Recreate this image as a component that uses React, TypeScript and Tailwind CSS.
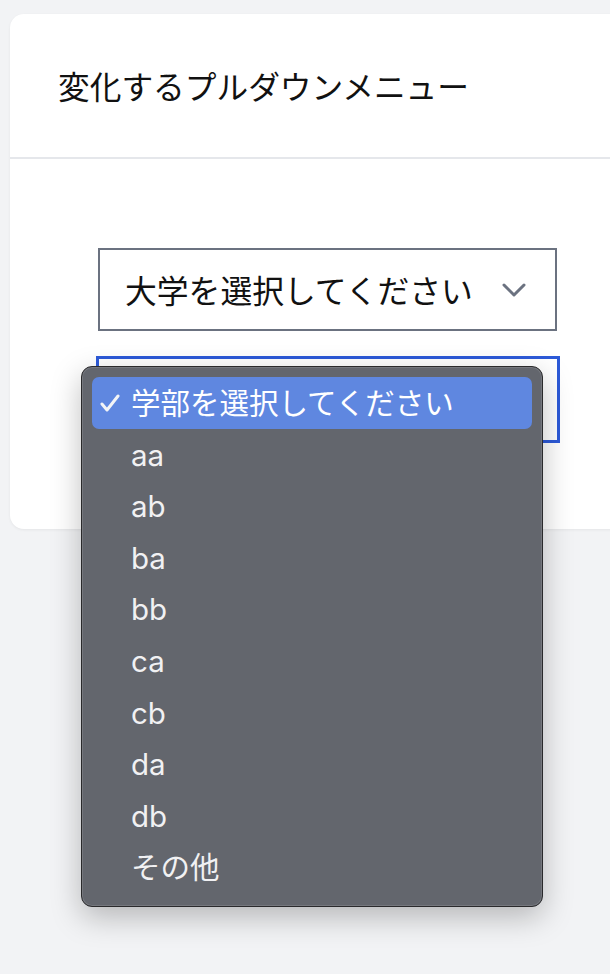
import React from 'react';

const options = ['aa', 'ab', 'ba', 'bb', 'ca', 'cb', 'da', 'db', 'その他'];

const ChevronDown: React.FC = () => (
    <svg width="26" height="16" viewBox="0 0 26 16" fill="none">
        <path d="M3 3l10 10L23 3" stroke="#6b7280" strokeWidth="3" strokeLinecap="round" strokeLinejoin="round" />
    </svg>
);

const CheckIcon: React.FC = () => (
    <svg width="20" height="18" viewBox="0 0 20 18" fill="none">
        <path d="M2 10l5 6L18 2" stroke="#f3f4f6" strokeWidth="3" strokeLinecap="round" strokeLinejoin="round" />
    </svg>
);

const DropdownMenu: React.FC = () => (
    <div className="absolute left-[81px] top-[366px] w-[462px] rounded-[11px] border border-[#2a2a2c] bg-[#63666d] px-[10px] pt-[10px] pb-[13px] shadow-[0_10px_30px_rgba(0,0,0,0.25),inset_0_0_0_1px_rgba(255,255,255,0.12)]">
        <div className="flex h-[52px] items-center rounded-[7px] bg-[#5f87e0] pl-[8px] text-white">
            <span className="w-[31px]"><CheckIcon /></span>
            <span>学部を選択してください</span>
        </div>
        {options.map((o) => (
            <div key={o} className="flex h-[51.6px] items-center pl-[39px] text-[#f1f1f3]">
                {o}
            </div>
        ))}
    </div>
);

const App: React.FC = () => {
    return (
        <div
            className="relative h-[974px] w-[610px] overflow-hidden bg-[#f2f3f5]"
            style={{ fontFamily: '"Noto Sans CJK JP", sans-serif' }}
        >
            <div className="ml-[10px] mt-[14px] w-[640px] rounded-[14px] bg-white shadow-[0_1px_3px_rgba(0,0,0,0.06)]">
                <div className="flex h-[145px] items-center border-b-2 border-[#e5e7eb] pl-[48px] text-[31.7px] text-[#111]">
                    変化するプルダウンメニュー
                </div>
                <div className="flex flex-col gap-[25px] pl-[88px] pt-[89px] pb-[86px]">
                    <div className="flex h-[83px] w-[459px] items-center justify-between border-2 border-[#6b7280] pl-[25px] pr-[28px] text-[31.8px] text-[#111]">
                        <span>大学を選択してください</span>
                        <ChevronDown />
                    </div>
                    <div className="-ml-[2px] h-[87px] w-[464px] border-[3px] border-[#2d5ad8]" />
                </div>
            </div>
            <div style={{ fontFamily: 'Inter, "Noto Sans CJK JP", sans-serif' }} className="text-[29.5px]">
                <DropdownMenu />
            </div>
        </div>
    );
};

export default App;
